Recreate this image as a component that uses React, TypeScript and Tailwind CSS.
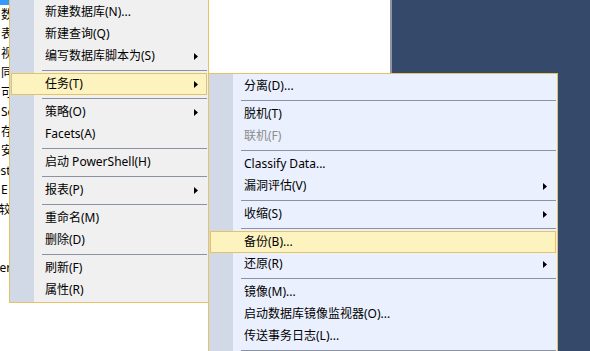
type Item =
  | { sep: true }
  | {
      sep?: false;
      label: string;
      arrow?: boolean;
      active?: boolean;
      disabled?: boolean;
    };

const mainMenu: Item[] = [
  { label: "新建数据库(N)..." },
  { label: "新建查询(Q)" },
  { label: "编写数据库脚本为(S)", arrow: true },
  { sep: true },
  { label: "任务(T)", arrow: true, active: true },
  { sep: true },
  { label: "策略(O)", arrow: true },
  { label: "Facets(A)" },
  { sep: true },
  { label: "启动 PowerShell(H)" },
  { sep: true },
  { label: "报表(P)", arrow: true },
  { sep: true },
  { label: "重命名(M)" },
  { label: "删除(D)" },
  { sep: true },
  { label: "刷新(F)" },
  { label: "属性(R)" },
];

const taskMenu: Item[] = [
  { label: "分离(D)..." },
  { sep: true },
  { label: "脱机(T)" },
  { label: "联机(F)", disabled: true },
  { sep: true },
  { label: "Classify Data..." },
  { label: "漏洞评估(V)", arrow: true },
  { sep: true },
  { label: "收缩(S)", arrow: true },
  { sep: true },
  { label: "备份(B)...", active: true },
  { label: "还原(R)", arrow: true },
  { sep: true },
  { label: "镜像(M)..." },
  { label: "启动数据库镜像监视器(O)..." },
  { label: "传送事务日志(L)..." },
  { sep: true },
];

const treeRows = [
  { text: "数据库关系图", cls: "ml-[1px]" },
  { text: "表", cls: "ml-[1px]" },
  { text: "视图", cls: "ml-[1px]" },
  { text: "同义词", cls: "ml-[1px]" },
  { text: "可编程性", cls: "ml-[1px]" },
  { text: "Service Broker", cls: "ml-[1px]" },
  { text: "存储", cls: "ml-[1px]" },
  { text: "安全性", cls: "ml-[1px]" },
  { text: "Test", cls: "ml-[-12px]" },
  { text: "E", cls: "ml-[1px]" },
  { text: "较", cls: "ml-[-1px]" },
  { text: "", cls: "" },
  { text: "", cls: "" },
  { text: "Server", cls: "ml-[-25px]" },
];

function Arrow() {
  return (
    <svg width="4" height="7" viewBox="0 0 4 7" className="shrink-0">
      <path d="M0 0 L4 3.5 L0 7 Z" fill="#000" />
    </svg>
  );
}

function MenuRows({ items }: { items: Item[] }) {
  return (
    <>
      {items.map((it, i) =>
        it.sep ? (
          <div key={i} className="h-[6px] flex items-center ml-[32px] mr-[1px]">
            <div className="h-px w-full bg-[#8a92a4]" />
          </div>
        ) : (
          <div
            key={i}
            className={
              "relative h-[22px] ml-[1px] mr-[1px] flex items-center justify-between pl-[33px] pr-[8px] border " +
              (it.active
                ? "bg-[#fdf3bf] border-[#e5c365]"
                : "border-transparent")
            }
          >
            <span
              className={
                "whitespace-nowrap leading-none " +
                (it.disabled ? "text-[#8d8d8d]" : "text-black")
              }
            >
              {it.label}
            </span>
            {it.arrow && <Arrow />}
          </div>
        )
      )}
    </>
  );
}

export default function App() {
  return (
    <div className="relative w-[590px] h-[351px] overflow-hidden flex bg-white font-['Noto_Sans','Noto_Sans_CJK_SC',sans-serif] text-[12px]">
      {/* object explorer behind the menus */}
      <div className="w-[390px] h-full overflow-hidden flex flex-col bg-white mt-[-14px]">
        <div className="h-[19px] shrink-0 flex items-center leading-none">
          <span className="h-full w-[60px] bg-[#3399ff] text-white flex items-center pl-[1px]">
            SQL
          </span>
        </div>
        {treeRows.map((r, i) => (
          <div
            key={i}
            className="h-[19.5px] shrink-0 flex items-center leading-none text-black"
          >
            <span className={"whitespace-nowrap " + r.cls}>{r.text}</span>
          </div>
        ))}
      </div>
      <div className="w-[2px] h-full bg-[#8d94a6]" />
      <div className="flex-1 h-full bg-[#35496a]" />

      {/* context menu */}
      <div className="absolute left-[9px] top-[-2px] w-[200px] border border-[#e5c365] bg-[#f0f0f0] pt-[2px] pb-[1px]">
        <div className="absolute left-0 top-0 bottom-0 w-[24px] bg-[#d1d8e6]" />
        <MenuRows items={mainMenu} />
      </div>

      {/* tasks submenu */}
      <div className="absolute left-[208px] top-[73px] w-[350px] border border-[#e5c365] bg-[#eaf0fe] pt-[1px]">
        <div className="absolute left-0 top-0 bottom-0 w-[24px] bg-[#d1d8e6]" />
        <MenuRows items={taskMenu} />
      </div>
    </div>
  );
}
